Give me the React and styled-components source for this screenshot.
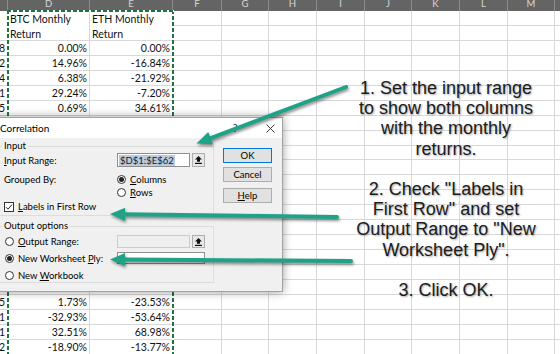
import React from "react";
import styled, { createGlobalStyle } from "styled-components";

const GlobalStyle = createGlobalStyle`
  html, body {
    margin: 0;
    padding: 0;
    background: #ffffff;
  }
  body {
    width: 560px;
    height: 354px;
    overflow: hidden;
  }
`;

const COLS = [60, 82, 83, 49, 47, 48, 48, 47, 48, 48, 47, 48];
const LETTERS = ["C", "D", "E", "F", "G", "H", "I", "J", "K", "L", "M", "N"];
const BLANKS = 9; // F..N

const DATA = [
  ["301.48", "0.00%", "0.00%"],
  ["389.62", "14.96%", "-16.84%"],
  ["414.04", "6.38%", "-21.92%"],
  ["535.41", "29.24%", "-7.20%"],
  ["538.75", "0.69%", "34.61%"],
  ["612.30", "4.12%", "9.87%"],
  ["677.63", "10.67%", "-2.55%"],
  ["701.21", "3.48%", "12.40%"],
  ["1,019.05", "45.33%", "61.02%"],
  ["1,236.88", "21.37%", "54.19%"],
  ["2,451.40", "98.20%", "78.66%"],
  ["2,693.24", "9.86%", "-4.13%"],
  ["4,764.87", "76.92%", "29.48%"],
  ["4,349.29", "-8.72%", "-27.61%"],
  ["6,468.40", "48.72%", "44.05%"],
  ["10,233.90", "58.21%", "69.74%"],
  ["14,156.40", "38.33%", "121.20%"],
  ["5,121.75", "1.73%", "-23.53%"],
  ["4,278.01", "-32.93%", "-53.64%"],
  ["5,671.11", "32.51%", "68.98%"],
  ["4,541.02", "-18.90%", "-13.77%"],
];

const Page = styled.div`
  position: relative;
  width: 560px;
  height: 354px;
  overflow: hidden;
  background: #ffffff;
`;

const Sheet = styled.div`
  display: grid;
  grid-template-columns: ${COLS.map((w) => `${w}px`).join(" ")};
  grid-template-rows: 11px 15px;
  grid-auto-rows: 14.95px;
  margin-left: -52px;
  width: ${COLS.reduce((a, b) => a + b, 0)}px;
  font-family: Lato, "Open Sans", sans-serif;
`;

const HeadCell = styled.div`
  box-sizing: border-box;
  background: #646464;
  color: #d8d8d8;
  border-right: 1px solid #8c8c8c;
  font-size: 9.5px;
  line-height: 8px;
  text-align: center;
  overflow: hidden;
`;

const Cell = styled.div`
  box-sizing: border-box;
  border-right: 1px solid #d8d8d8;
  border-bottom: 1px solid #d8d8d8;
  padding: 1.5px 2px 0;
  font-size: 10.5px;
  line-height: 13px;
  color: #111;
  text-align: ${(p) => p.$align || "left"};
  white-space: nowrap;
  overflow: hidden;
`;

const LabelCell = styled(Cell)`
  grid-row: span 2;
  padding-top: 1px;
  line-height: 15px;
  white-space: normal;
`;

const Marquee = styled.div`
  position: absolute;
  left: 7px;
  top: 10px;
  width: 167px;
  bottom: -10px;
  pointer-events: none;
  background:
    repeating-linear-gradient(90deg, #217346 0 4px, #ffffff 4px 6px) top left / 100% 2px no-repeat,
    repeating-linear-gradient(180deg, #217346 0 4px, #ffffff 4px 6px) top left / 2px 100% no-repeat,
    repeating-linear-gradient(180deg, #217346 0 4px, #ffffff 4px 6px) top right / 2px 100% no-repeat;
`;

/* ---------- dialog ---------- */

const Dialog = styled.div`
  position: absolute;
  left: -8px;
  top: 117px;
  width: 291px;
  height: 175px;
  box-sizing: border-box;
  border: 1px solid #a3a3a3;
  background: #f0f0f0;
  box-shadow: 0 0 9px rgba(0, 0, 0, 0.38);
  display: flex;
  flex-direction: column;
  font-family: Lato, "Open Sans", sans-serif;
  font-size: 9.5px;
  color: #000;
`;

const TitleBar = styled.div`
  height: 20px;
  background: #ffffff;
  display: flex;
  align-items: center;
  padding-left: 7px;
`;

const TitleText = styled.div`
  flex: 1;
  font-size: 10px;
`;

const TitleButton = styled.div`
  width: 24px;
  height: 20px;
  display: flex;
  align-items: center;
  justify-content: center;
  font-size: 10.5px;
  color: #333;
  margin-left: ${(p) => (p.$close ? "11px" : "0")};
`;

const DialogBody = styled.div`
  flex: 1;
  display: grid;
  grid-template-columns: 217px 49px;
  column-gap: 9px;
  padding: 2px 10px 0 4px;
  align-items: start;
`;

const Groups = styled.div`
  display: flex;
  flex-direction: column;
`;

const Group = styled.fieldset`
  margin: ${(p) => p.$mt || 0}px 0 0;
  padding: 0 6px ${(p) => p.$pb || 0}px;
  border: 1px solid #dcdcdc;
  min-width: 0;
`;

const Legend = styled.legend`
  padding: 0 2px;
  margin-left: -2px;
  font-size: 9.5px;
  line-height: 12px;
`;

const FieldRow = styled.div`
  display: flex;
  align-items: center;
  height: ${(p) => p.$h}px;
  margin-top: ${(p) => p.$mt || 0}px;
`;

const FieldLabel = styled.div`
  width: 113px;
  flex: none;
`;

const Option = styled.label`
  display: flex;
  align-items: center;
  gap: 4px;
  padding-left: ${(p) => (p.$inset ? 1 : 0)}px;
`;

const Radio = styled.span`
  width: 9px;
  height: 9px;
  box-sizing: border-box;
  border: 1px solid #333;
  border-radius: 50%;
  background: #fff;
  display: flex;
  align-items: center;
  justify-content: center;
  &::after {
    content: "";
    width: 5px;
    height: 5px;
    border-radius: 50%;
    background: ${(p) => (p.$on ? "#222" : "transparent")};
  }
`;

const CheckBox = styled.span`
  width: 10px;
  height: 10px;
  box-sizing: border-box;
  border: 1px solid #333;
  background: #fff;
  display: flex;
  align-items: center;
  justify-content: center;
`;

const TextBox = styled.div`
  box-sizing: border-box;
  width: ${(p) => p.$w}px;
  height: ${(p) => p.$h}px;
  border: 1px solid ${(p) => (p.$disabled ? "#cccccc" : "#8f8f8f")};
  background: ${(p) => (p.$disabled ? "#efefef" : "#ffffff")};
  display: flex;
  align-items: center;
  padding-left: 1px;
  font-size: 9.5px;
`;

const Selected = styled.span`
  background: #b9cadf;
  color: #1a1a1a;
  line-height: 11px;
  padding: 0 1px;
`;

const RefButton = styled.div`
  box-sizing: border-box;
  width: 13px;
  height: ${(p) => p.$h}px;
  margin-left: 2px;
  border: 1px solid #adadad;
  background: #e8e8e8;
  display: flex;
  align-items: center;
  justify-content: center;
`;

const Buttons = styled.div`
  display: flex;
  flex-direction: column;
  padding-top: 8px;
`;

const DlgButton = styled.div`
  box-sizing: border-box;
  height: 15px;
  margin-top: ${(p) => p.$mt || 0}px;
  border: 1px solid ${(p) => (p.$default ? "#0078d7" : "#adadad")};
  background: #e1e1e1;
  display: flex;
  align-items: center;
  justify-content: center;
  font-size: 9.5px;
`;

/* ---------- annotation ---------- */

const Note = styled.div`
  position: absolute;
  left: 336px;
  top: 78px;
  width: 220px;
  text-align: center;
  font-family: "Liberation Sans", Arial, sans-serif;
  font-size: 18px;
  line-height: 20.2px;
  color: #1c1c1c;
  text-shadow: 1px 1px 2px rgba(0, 0, 0, 0.35);
`;

const ArrowLayer = styled.svg`
  position: absolute;
  left: 0;
  top: 0;
  pointer-events: none;
  overflow: visible;
  filter: drop-shadow(1px 2px 1.5px rgba(0, 0, 0, 0.45));
`;

const TEAL = "#1fa386";

function Arrow({ x1, y1, x2, y2 }) {
  const dx = x2 - x1;
  const dy = y2 - y1;
  const len = Math.hypot(dx, dy);
  const ux = dx / len;
  const uy = dy / len;
  const hl = 15;
  const hw = 6.5;
  const bx = x2 - ux * hl;
  const by = y2 - uy * hl;
  const px = -uy;
  const py = ux;
  const pts = `${x2},${y2} ${bx + px * hw},${by + py * hw} ${bx - px * hw},${by - py * hw}`;
  return (
    <g>
      <line
        x1={x1}
        y1={y1}
        x2={bx + ux * 2}
        y2={by + uy * 2}
        stroke={TEAL}
        strokeWidth="4"
        strokeLinecap="round"
      />
      <polygon points={pts} fill={TEAL} />
    </g>
  );
}

const RefIcon = () => (
  <svg width="7" height="8" viewBox="0 0 7 8">
    <polygon points="3.5,0 7,3.5 5,3.5 5,5.8 2,5.8 2,3.5 0,3.5" fill="#111" />
    <rect x="0" y="6.8" width="7" height="1.2" fill="#111" />
  </svg>
);

const CheckMark = () => (
  <svg width="8" height="8" viewBox="0 0 8 8">
    <polyline points="1,4.2 3,6.2 7,1.6" fill="none" stroke="#222" strokeWidth="1" />
  </svg>
);

const CloseIcon = () => (
  <svg width="9" height="9" viewBox="0 0 9 9">
    <path d="M0.5 0.5 L8.5 8.5 M8.5 0.5 L0.5 8.5" stroke="#222" strokeWidth="0.9" />
  </svg>
);

export default function App() {
  return (
    <Page>
      <GlobalStyle />
      <Sheet>
        {LETTERS.map((l) => (
          <HeadCell key={l}>{l}</HeadCell>
        ))}
        <LabelCell />
        <LabelCell>
          BTC Monthly
          <br />
          Return
        </LabelCell>
        <LabelCell>
          ETH Monthly
          <br />
          Return
        </LabelCell>
        {Array.from({ length: BLANKS * 2 }).map((_, i) => (
          <Cell key={`h${i}`} />
        ))}
        {DATA.map((row, r) => (
          <React.Fragment key={r}>
            {row.map((v, c) => (
              <Cell key={c} $align="right">
                {v}
              </Cell>
            ))}
            {Array.from({ length: BLANKS }).map((_, i) => (
              <Cell key={`b${i}`} />
            ))}
          </React.Fragment>
        ))}
      </Sheet>
      <Marquee />

      <Dialog>
        <TitleBar>
          <TitleText>Correlation</TitleText>
          <TitleButton>?</TitleButton>
          <TitleButton $close>
            <CloseIcon />
          </TitleButton>
        </TitleBar>
        <DialogBody>
          <Groups>
            <Group $pb={2}>
              <Legend>Input</Legend>
              <FieldRow $h={14} $mt={1}>
                <FieldLabel>
                  <u>I</u>nput Range:
                </FieldLabel>
                <TextBox $w={73} $h={14}>
                  <Selected>$D$1:$E$62</Selected>
                </TextBox>
                <RefButton $h={14}>
                  <RefIcon />
                </RefButton>
              </FieldRow>
              <FieldRow $h={13} $mt={6}>
                <FieldLabel>Grouped By:</FieldLabel>
                <Option>
                  <Radio $on />
                  <span>
                    <u>C</u>olumns
                  </span>
                </Option>
              </FieldRow>
              <FieldRow $h={13}>
                <FieldLabel />
                <Option>
                  <Radio />
                  <span>
                    <u>R</u>ows
                  </span>
                </Option>
              </FieldRow>
              <FieldRow $h={13} $mt={1}>
                <Option>
                  <CheckBox>
                    <CheckMark />
                  </CheckBox>
                  <span>
                    <u>L</u>abels in First Row
                  </span>
                </Option>
              </FieldRow>
            </Group>
            <Group $mt={4} $pb={0.5}>
              <Legend>Output options</Legend>
              <FieldRow $h={13} $mt={3}>
                <FieldLabel>
                  <Option $inset>
                    <Radio />
                    <span>
                      <u>O</u>utput Range:
                    </span>
                  </Option>
                </FieldLabel>
                <TextBox $w={73} $h={13} $disabled />
                <RefButton $h={13}>
                  <RefIcon />
                </RefButton>
              </FieldRow>
              <FieldRow $h={12} $mt={4}>
                <FieldLabel>
                  <Option $inset>
                    <Radio $on />
                    <span>
                      New Worksheet <u>P</u>ly:
                    </span>
                  </Option>
                </FieldLabel>
                <TextBox $w={88} $h={12} />
              </FieldRow>
              <FieldRow $h={13} $mt={4.5}>
                <Option $inset>
                  <Radio />
                  <span>
                    New <u>W</u>orkbook
                  </span>
                </Option>
              </FieldRow>
            </Group>
          </Groups>
          <Buttons>
            <DlgButton $default>OK</DlgButton>
            <DlgButton $mt={4}>Cancel</DlgButton>
            <DlgButton $mt={6}>
              <u>H</u>elp
            </DlgButton>
          </Buttons>
        </DialogBody>
      </Dialog>

      <Note>
        1. Set the input range
        <br />
        to show both columns
        <br />
        with the monthly
        <br />
        returns.
        <br />
        <br />
        2. Check "Labels in
        <br />
        First Row" and set
        <br />
        Output Range to "New
        <br />
        Worksheet Ply".
        <br />
        <br />
        3. Click OK.
      </Note>

      <ArrowLayer width="560" height="354" viewBox="0 0 560 354">
        <Arrow x1={346} y1={87} x2={196.5} y2={143.5} />
        <Arrow x1={337} y1={217} x2={110} y2={214} />
        <Arrow x1={351} y1={261} x2={110} y2={259.5} />
      </ArrowLayer>
    </Page>
  );
}
